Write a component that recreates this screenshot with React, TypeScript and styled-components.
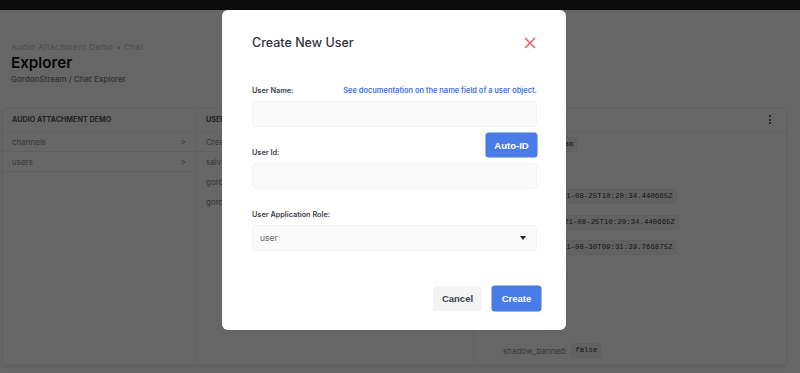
import React from "react";
import styled, { createGlobalStyle } from "styled-components";

const GlobalStyle = createGlobalStyle`
  * { box-sizing: border-box; }
  html, body { margin: 0; padding: 0; }
  body {
    background: #ffffff;
    font-family: Inter, "Noto Sans", sans-serif;
    width: 800px;
    height: 373px;
    overflow: hidden;
  }
`;

const Page = styled.div`
  position: relative;
  width: 800px;
  height: 373px;
  display: flex;
  flex-direction: column;
  background: #ffffff;
`;

const TopBar = styled.div`
  height: 10px;
  background: #1d1d1f;
  flex: none;
`;

const Header = styled.header`
  padding: 31px 11px 0 11px;
  display: flex;
  flex-direction: column;
`;

const Breadcrumb = styled.div`
  font-size: 8px;
  line-height: 12px;
  letter-spacing: 0.5px;
  color: #bdbdbd;
`;

const PageTitle = styled.h1`
  margin: 0;
  font-size: 15.2px;
  line-height: 20px;
  font-weight: 600;
  color: #111;
`;

const SubTitle = styled.div`
  font-size: 8px;
  line-height: 12px;
  font-weight: 500;
  color: #7a7a7a;
`;

const Explorer = styled.section`
  margin: 23px 13px 0 2px;
  height: 257px;
  display: flex;
  background: #fff;
  border: 1px solid #f0f0f0;
  border-radius: 3px;
  box-shadow: 0 2px 4px rgba(0, 0, 0, 0.08);
`;

const Column = styled.div<{ $width?: number }>`
  display: flex;
  flex-direction: column;
  min-height: 0;
  ${(p) => (p.$width ? `width: ${p.$width}px; flex: none;` : "flex: 1;")}
  border-right: 1px solid #f0f0f0;
  &:last-child { border-right: none; }
`;

const ColHeader = styled.div<{ $end?: boolean }>`
  height: 23px;
  flex: none;
  display: flex;
  align-items: center;
  justify-content: ${(p) => (p.$end ? "flex-end" : "space-between")};
  padding: 0 15px 1px 9px;
  border-bottom: 1px solid #f0f0f0;
  font-size: 7.2px;
  font-weight: 700;
  text-transform: uppercase;
  color: #555;
`;

const ListRow = styled.div<{ $divider?: boolean }>`
  height: 20px;
  flex: none;
  display: flex;
  align-items: center;
  justify-content: space-between;
  padding: 0 10px 0 9px;
  font-size: 8px;
  color: #8a8a8a;
  border-bottom: 1px solid ${(p) => (p.$divider ? "#eeeeee" : "transparent")};
`;

const Chevron = styled.span`
  font-size: 8px;
  color: #8a8a8a;
`;

const Kebab = styled.div`
  display: flex;
  flex-direction: column;
  gap: 1.5px;
  span {
    width: 2px;
    height: 2px;
    border-radius: 50%;
    background: #333;
  }
`;

const Fields = styled.div`
  display: flex;
  flex-direction: column;
  padding: 0 0 0 29px;
`;

const FieldRow = styled.div`
  height: 25.75px;
  flex: none;
  display: flex;
  align-items: center;
  gap: 4px;
`;

const FieldLabel = styled.span`
  font-size: 8px;
  color: #8a8a8a;
`;

const Chip = styled.span`
  font-family: "Liberation Mono", "DejaVu Sans Mono", monospace;
  font-size: 7.4px;
  line-height: 13px;
  padding: 0 3px;
  background: #f6f6f6;
  border: 1px solid #eeeeee;
  border-radius: 3px;
  color: #333;
`;

const Overlay = styled.div`
  position: absolute;
  inset: 0;
  background: rgba(0, 0, 0, 0.6);
`;

const Modal = styled.div`
  position: absolute;
  top: 10px;
  left: 222px;
  width: 344px;
  height: 320px;
  background: #fff;
  border-radius: 6px;
  display: flex;
  flex-direction: column;
  padding: 25px 0 19px 0;
`;

const ModalBody = styled.div`
  padding: 0 29px 0 30px;
  display: flex;
  flex-direction: column;
`;

const ModalHead = styled.div`
  height: 16px;
  display: flex;
  align-items: center;
  justify-content: space-between;
  margin-bottom: 33px;
`;

const ModalTitle = styled.h2`
  margin: 0;
  font-size: 12.5px;
  line-height: 16px;
  font-weight: 500;
  color: #2f323c;
`;

const CloseButton = styled.button`
  border: none;
  background: none;
  padding: 0;
  width: 12px;
  height: 12px;
  display: flex;
  margin-right: 1px;
`;

const Field = styled.div`
  display: flex;
  flex-direction: column;
  gap: 6px;
  & + & { margin-top: 19px; }
`;

const LabelRow = styled.div`
  height: 11px;
  display: flex;
  align-items: flex-end;
  justify-content: space-between;
`;

const Label = styled.label`
  font-size: 7.3px;
  line-height: 9px;
  font-weight: 600;
  color: #3a3d47;
`;

const DocLink = styled.a`
  font-size: 7.45px;
  line-height: 9px;
  font-weight: 600;
  color: #3f72e8;
  text-decoration: none;
`;

const Input = styled.div`
  height: 26px;
  background: #fafafa;
  border: 1px solid #f1f1f1;
  border-radius: 4px;
  display: flex;
  align-items: center;
  justify-content: space-between;
  padding: 0 10px 0 7px;
  font-size: 8.5px;
  color: #666;
`;

const Caret = styled.span`
  width: 0;
  height: 0;
  border-left: 3.5px solid transparent;
  border-right: 3.5px solid transparent;
  border-top: 4px solid #222;
`;

const Button = styled.button<{ $primary?: boolean }>`
  height: 25px;
  width: 49px;
  border: none;
  border-radius: 3px;
  font-family: "Liberation Sans", Arial, sans-serif;
  font-size: 9.5px;
  font-weight: 700;
  padding: 0;
  background: ${(p) => (p.$primary ? "#4a7ce8" : "#f4f4f5")};
  color: ${(p) => (p.$primary ? "#ffffff" : "#3a3d47")};
  box-shadow: ${(p) => (p.$primary ? "0 0 0 0.5px #3f6fd8" : "none")};
`;

const AutoIdButton = styled(Button)`
  width: 51px;
  height: 24px;
  flex: none;
`;

const Footer = styled.div`
  margin-top: auto;
  padding: 0 25px;
  display: flex;
  justify-content: flex-end;
  gap: 10px;
`;

const fields: [string, string][] = [
  ["id:", "gordonstream"],
  ["role:", "user"],
  ["created_at:", "2021-08-25T10:20:34.440665Z"],
  ["updated_at:", "2021-08-25T10:20:34.440665Z"],
  ["last_active:", "2021-08-30T09:31:39.766875Z"],
  ["banned:", "false"],
  ["online:", "false"],
  ["language:", "en"],
  ["shadow_banned:", "false"],
];

export default function App() {
  return (
    <>
      <GlobalStyle />
      <Page>
        <TopBar />
        <Header>
          <Breadcrumb>Audio Attachment Demo • Chat</Breadcrumb>
          <PageTitle>Explorer</PageTitle>
          <SubTitle>GordonStream / Chat Explorer</SubTitle>
        </Header>
        <Explorer>
          <Column $width={194}>
            <ColHeader>Audio Attachment Demo</ColHeader>
            <ListRow $divider>
              channels <Chevron>&gt;</Chevron>
            </ListRow>
            <ListRow $divider>
              users <Chevron>&gt;</Chevron>
            </ListRow>
          </Column>
          <Column $width={277}>
            <ColHeader>Users</ColHeader>
            <ListRow $divider>Create New User</ListRow>
            <ListRow>salvatore</ListRow>
            <ListRow>gordon</ListRow>
            <ListRow>gordonstream</ListRow>
          </Column>
          <Column>
            <ColHeader $end>
              <Kebab>
                <span />
                <span />
                <span />
              </Kebab>
            </ColHeader>
            <Fields>
              {fields.map(([k, v]) => (
                <FieldRow key={k}>
                  <FieldLabel>{k}</FieldLabel>
                  <Chip>{v}</Chip>
                </FieldRow>
              ))}
            </Fields>
          </Column>
        </Explorer>
        <Overlay>
          <Modal>
            <ModalBody>
              <ModalHead>
                <ModalTitle>Create New User</ModalTitle>
                <CloseButton aria-label="Close">
                  <svg width="12" height="12" viewBox="0 0 12 12">
                    <path d="M1 1 L11 11 M11 1 L1 11" stroke="#e5484d" strokeWidth="1.2" fill="none" />
                  </svg>
                </CloseButton>
              </ModalHead>
              <Field>
                <LabelRow>
                  <Label>User Name:</Label>
                  <DocLink>See documentation on the name field of a user object.</DocLink>
                </LabelRow>
                <Input />
              </Field>
              <Field>
                <LabelRow>
                  <Label>User Id:</Label>
                  <AutoIdButton $primary>Auto-ID</AutoIdButton>
                </LabelRow>
                <Input />
              </Field>
              <Field>
                <LabelRow>
                  <Label>User Application Role:</Label>
                </LabelRow>
                <Input>
                  user
                  <Caret />
                </Input>
              </Field>
            </ModalBody>
            <Footer>
              <Button>Cancel</Button>
              <Button $primary>Create</Button>
            </Footer>
          </Modal>
        </Overlay>
      </Page>
    </>
  );
}
